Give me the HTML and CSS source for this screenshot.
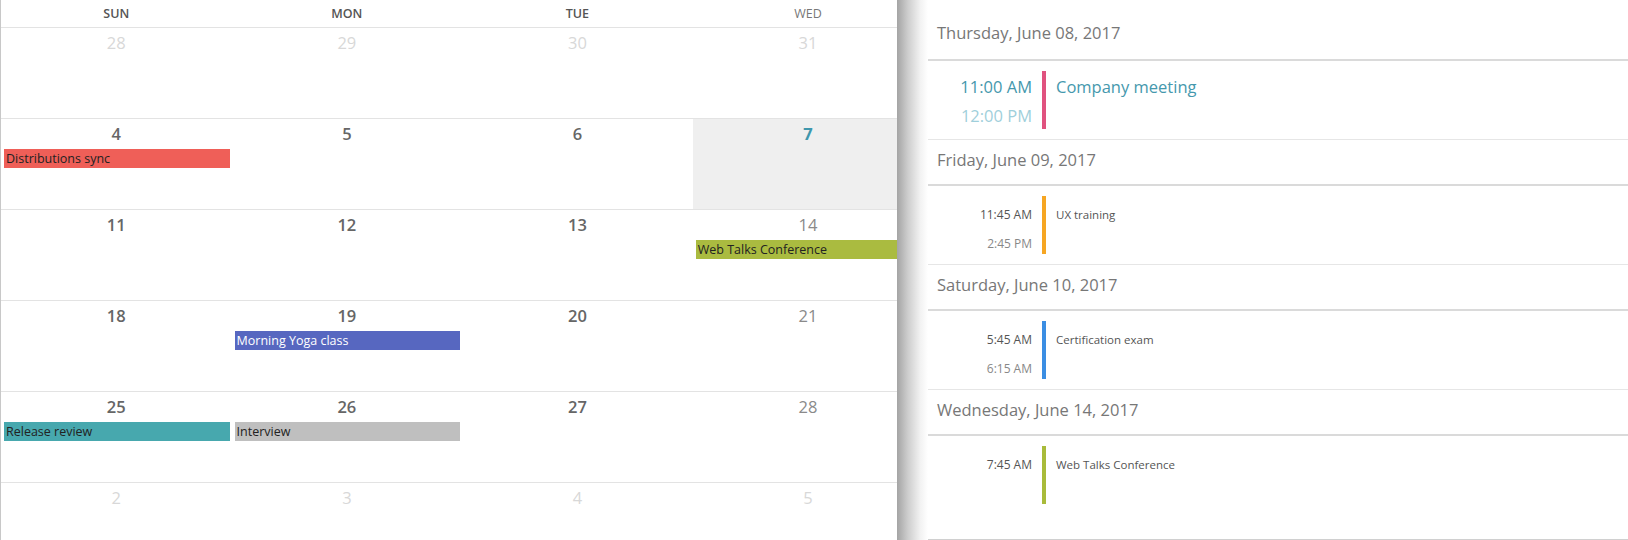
FILE: index.html
```html
<!DOCTYPE html>
<html lang="en">
<head>
    <meta charset="UTF-8">
    <title>Scheduler - Month and Agenda</title>
    <link rel="stylesheet" href="styles.css">
</head>
<body>
    <div class="page">
        <!-- MONTH VIEW (thu-sat columns sit under the drawer) -->
        <div class="month">
            <div class="week head">
                <div class="day-name">SUN</div>
                <div class="day-name">MON</div>
                <div class="day-name">TUE</div>
                <div class="day-name wed">WED</div>
                <div class="day-name"></div>
                <div class="day-name"></div>
                <div class="day-name"></div>
            </div>

            <div class="week">
                <div class="cell other"><div class="num">28</div></div>
                <div class="cell other"><div class="num">29</div></div>
                <div class="cell other"><div class="num">30</div></div>
                <div class="cell other"><div class="num">31</div></div>
                <div class="cell"></div>
                <div class="cell"></div>
                <div class="cell"></div>
            </div>

            <div class="week">
                <div class="cell"><div class="num">4</div><div class="event red">Distributions sync</div></div>
                <div class="cell"><div class="num">5</div></div>
                <div class="cell"><div class="num">6</div></div>
                <div class="cell today"><div class="num">7</div></div>
                <div class="cell"></div>
                <div class="cell"></div>
                <div class="cell"></div>
            </div>

            <div class="week">
                <div class="cell"><div class="num">11</div></div>
                <div class="cell"><div class="num">12</div></div>
                <div class="cell"><div class="num">13</div></div>
                <div class="cell wed"><div class="num">14</div><div class="event olive">Web Talks Conference</div></div>
                <div class="cell"></div>
                <div class="cell"></div>
                <div class="cell"></div>
            </div>

            <div class="week">
                <div class="cell"><div class="num">18</div></div>
                <div class="cell"><div class="num">19</div><div class="event indigo">Morning Yoga class</div></div>
                <div class="cell"><div class="num">20</div></div>
                <div class="cell wed"><div class="num">21</div></div>
                <div class="cell"></div>
                <div class="cell"></div>
                <div class="cell"></div>
            </div>

            <div class="week">
                <div class="cell"><div class="num">25</div><div class="event teal">Release review</div></div>
                <div class="cell"><div class="num">26</div><div class="event grey">Interview</div></div>
                <div class="cell"><div class="num">27</div></div>
                <div class="cell wed"><div class="num">28</div></div>
                <div class="cell"></div>
                <div class="cell"></div>
                <div class="cell"></div>
            </div>

            <div class="week">
                <div class="cell other"><div class="num">2</div></div>
                <div class="cell other"><div class="num">3</div></div>
                <div class="cell other"><div class="num">4</div></div>
                <div class="cell other"><div class="num">5</div></div>
                <div class="cell"></div>
                <div class="cell"></div>
                <div class="cell"></div>
            </div>
        </div>

        <!-- AGENDA DRAWER -->
        <div class="agenda">
            <div class="agenda-shadow"></div>
            <div class="agenda-list">
                <div class="agenda-day first">Thursday, June 08, 2017</div>
                <div class="agenda-item current">
                    <div class="times">
                        <div class="start">11:00 AM</div>
                        <div class="end">12:00 PM</div>
                    </div>
                    <div class="bar pink"></div>
                    <div class="title">Company meeting</div>
                </div>

                <div class="agenda-day">Friday, June 09, 2017</div>
                <div class="agenda-item">
                    <div class="times">
                        <div class="start">11:45 AM</div>
                        <div class="end">2:45 PM</div>
                    </div>
                    <div class="bar orange"></div>
                    <div class="title">UX training</div>
                </div>

                <div class="agenda-day">Saturday, June 10, 2017</div>
                <div class="agenda-item">
                    <div class="times">
                        <div class="start">5:45 AM</div>
                        <div class="end">6:15 AM</div>
                    </div>
                    <div class="bar blue"></div>
                    <div class="title">Certification exam</div>
                </div>

                <div class="agenda-day">Wednesday, June 14, 2017</div>
                <div class="agenda-item">
                    <div class="times">
                        <div class="start">7:45 AM</div>
                    </div>
                    <div class="bar green"></div>
                    <div class="title">Web Talks Conference</div>
                </div>
            </div>
        </div>
    </div>
</body>
</html>
```

FILE: styles.css
```css
body {
    margin: 0;
    font-family: "Open Sans", "Noto Sans", sans-serif;
    background: white;
    overflow: hidden;
}

.page {
    position: relative;
    width: 1628px;
    height: 540px;
    overflow: hidden;
}

/* month view */
.month {
    width: 1614px;
    border-left: 1px solid #c8c8c8;
}

.week {
    display: grid;
    grid-template-columns: repeat(7, 1fr);
    height: 90px;
    border-bottom: 1px solid #e3e3e3;
}

.week.head {
    height: 27px;
}

.day-name {
    text-align: center;
    font-size: 12.5px;
    font-weight: 600;
    color: #555;
    line-height: 28px;
}

.day-name.wed {
    font-weight: normal;
    color: #777;
}

.cell {
    text-align: center;
    padding-top: 2px;
}

.num {
    font-size: 16.5px;
    line-height: 26px;
    font-weight: 600;
    color: #666;
}

.cell.wed .num {
    font-weight: normal;
    color: #8a8a8a;
}

.cell.other .num {
    font-weight: normal;
    color: #d8d8d8;
}

.cell.today {
    background: #efefef;
}

.cell.today .num {
    color: #3f97ad;
    font-weight: bold;
}

.event {
    margin: 2px 2px 0 3px;
    height: 19px;
    line-height: 19px;
    font-size: 12.5px;
    text-align: left;
    padding-left: 2px;
    color: #222;
    white-space: nowrap;
    overflow: hidden;
}

.event.red { background: #ef5f58; }
.event.olive { background: #aabb40; }
.event.indigo { background: #5767c0; color: white; }
.event.teal { background: #47a8ae; }
.event.grey { background: #bfbfbf; }

/* agenda drawer */
.agenda {
    position: absolute;
    top: 0;
    left: 897px;
    right: 0;
    bottom: 0;
    display: flex;
}

.agenda-shadow {
    width: 31px;
    background: linear-gradient(to right, #a4a4a4, #cdcdcd 35%, #f2f2f2 75%, #fff);
}

.agenda-list {
    flex: 1;
    background: white;
    border-bottom: 1px solid #d0d0d0;
    display: flex;
    flex-direction: column;
}

.agenda-day {
    height: 44px;
    line-height: 40px;
    padding-left: 9px;
    font-size: 16.5px;
    color: #777;
    border-bottom: 2px solid #dadada;
}

.agenda-day.first {
    height: 48px;
    padding-top: 11px;
    line-height: 44px;
}

.agenda-item {
    display: flex;
    padding: 10px 0;
    height: 58px;
    border-bottom: 1px solid #e6e6e6;
    font-size: 11.5px;
    color: #555;
}

.agenda-item:last-child {
    border-bottom: none;
    flex: 1;
}

.times {
    width: 104px;
    text-align: right;
    padding-top: 4px;
    line-height: 29px;
    font-size: 12px;
}

.times .end {
    color: #888;
}

.bar {
    width: 4px;
    height: 58px;
    margin: 0 10px;
}

.bar.pink { background: #e0527f; }
.bar.orange { background: #f6a623; }
.bar.blue { background: #3b8ee3; }
.bar.green { background: #a9bb3a; }

.title {
    padding-top: 4px;
    line-height: 29px;
}

.agenda-item.current {
    font-size: 16.5px;
    color: #4598ad;
}

.agenda-item.current .times {
    font-size: 16.5px;
    padding-top: 1px;
}

.agenda-item.current .title {
    padding-top: 1px;
}

.agenda-item.current .end {
    color: #9fcfdb;
}
```
